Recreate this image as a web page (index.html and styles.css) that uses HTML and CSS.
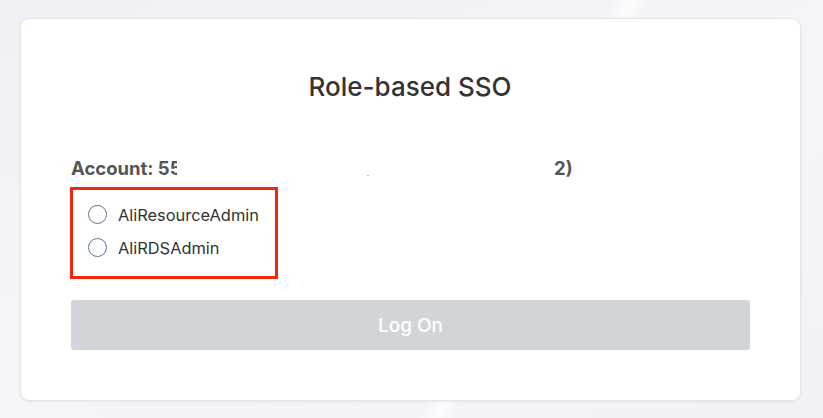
FILE: index.html
```html
<!DOCTYPE html>
<html>
<head>
<meta charset="utf-8">
<link rel="stylesheet" href="styles.css">
</head>
<body>
<div class="page">
  <div class="card">
    <h1 class="title">Role-based SSO</h1>
    <div class="account">
      <span class="acc-left"><span class="acc-clip">Account: 55</span></span>
      <span class="acc-dot"></span>
      <span class="acc-right">2)</span>
    </div>
    <div class="roles">
      <label class="role"><span class="radio"></span><span class="role-name">AliResourceAdmin</span></label>
      <label class="role"><span class="radio"></span><span class="role-name">AliRDSAdmin</span></label>
    </div>
    <button class="logon">Log On</button>
  </div>
</div>
</body>
</html>
```

FILE: styles.css
```css
html, body {
  margin: 0;
  padding: 0;
}
body {
  width: 823px;
  height: 418px;
  overflow: hidden;
  font-family: Inter, "Noto Sans", "Liberation Sans", sans-serif;
  background:
    linear-gradient(115deg, rgba(255,255,255,0) 0%, rgba(255,255,255,0) 60%, rgba(255,255,255,0.7) 62%, rgba(255,255,255,0) 64%, rgba(255,255,255,0) 100%),
    linear-gradient(160deg, #eef0f4 0%, #f5f6f9 50%, #f0f2f6 100%);
}
.page {
  padding: 18px 22px 17px 20px;
}
.card {
  box-sizing: border-box;
  width: 781px;
  height: 383px;
  background: #ffffff;
  border: 1px solid #e4e5e8;
  border-radius: 9px;
  box-shadow: 0 1px 3px rgba(0,0,0,0.06);
  padding: 0 51px 0 50px;
  display: flex;
  flex-direction: column;
}
.title {
  margin: 53px 0 0 0;
  text-align: center;
  font-size: 26px;
  font-weight: 500;
  color: #333333;
  line-height: 30px;
}
.account {
  margin-top: 54px;
  display: flex;
  align-items: center;
  height: 24px;
  font-size: 18.5px;
  font-weight: 700;
  color: #555555;
  position: relative;
}
.acc-left {
  width: 106px;
  overflow: hidden;
  white-space: nowrap;
  display: inline-block;
}
.acc-dot {
  position: absolute;
  left: 296px;
  top: 19px;
  width: 2px;
  height: 1px;
  background: #b8b8b8;
}
.acc-right {
  margin-left: 377px;
}
.roles {
  margin: 7px 0 0 -1px;
  width: 208px;
  height: 92px;
  border: 3px solid #f4260c;
  display: flex;
  flex-direction: column;
  padding: 15px 0 0 15px;
  box-sizing: border-box;
  gap: 14px;
}
.role {
  display: flex;
  align-items: center;
  height: 19px;
  gap: 11px;
}
.radio {
  box-sizing: border-box;
  width: 19px;
  height: 19px;
  border: 1.5px solid #5b7494;
  border-radius: 50%;
  flex: none;
}
.role-name {
  font-size: 16.4px;
  color: #333333;
}
.logon {
  margin-top: 21px;
  width: 679px;
  height: 50px;
  border: none;
  border-radius: 3px;
  background: #d1d4d8;
  color: #ffffff;
  font-family: Inter, "Noto Sans", "Liberation Sans", sans-serif;
  font-size: 19px;
  font-weight: 500;
  padding: 0;
}
```
